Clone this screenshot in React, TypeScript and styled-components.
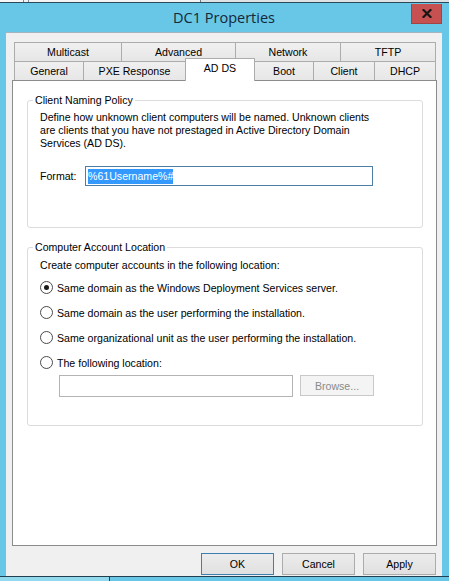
import React from "react";
import styled, { createGlobalStyle } from "styled-components";

const GlobalStyle = createGlobalStyle`
  html, body { margin: 0; padding: 0; }
  body {
    background: #68c6e6;
    overflow: hidden;
    font-family: "Liberation Sans", Arial, sans-serif;
    font-size: 10.6px;
    color: #000;
  }
`;

const Screen = styled.div`
  width: 449px;
  height: 581px;
  display: flex;
  flex-direction: column;
  background: #68c6e6;
  overflow: hidden;
`;

/* sliver of the window that sits behind the dialog */
const BackdropTop = styled.div`
  flex: none;
  height: 2px;
  background: linear-gradient(
    to right,
    #f6f6f6 0 23px,
    #7d8a93 23px 24px,
    #f4f4f4 24px 28px,
    #7d8a93 28px 29px,
    #f4f4f4 29px 200px,
    #6b7c88 200px 201px,
    #dde2e5 201px
  );
`;

const BackdropBottom = styled.div`
  flex: none;
  height: 4px;
  border-top: 1px solid #22404f;
  background: linear-gradient(
    to right,
    #93d9ee 0 109px,
    #22404f 109px 110px,
    #68c6e6 110px
  );
`;

const Window = styled.div`
  flex: none;
  height: 574px;
  box-sizing: border-box;
  border-top: 1px solid #2a4a5c;
  background: #68c6e6;
  display: flex;
  flex-direction: column;
  padding: 0 7px 0 6px;
`;

const TitleBar = styled.div`
  flex: none;
  height: 29px;
  display: grid;
  grid-template-columns: 1fr auto 1fr;
  align-items: center;
`;

const Title = styled.div`
  grid-column: 2;
  font-family: "Open Sans", "Noto Sans", sans-serif;
  font-size: 14.5px;
  color: #14283a;
`;

const CloseButton = styled.div`
  grid-column: 3;
  justify-self: end;
  align-self: start;
  margin-top: 1px;
  width: 31px;
  height: 20px;
  box-sizing: border-box;
  background: #c75050;
  border: 1px solid #a24444;
  border-top: none;
  display: flex;
  align-items: center;
  justify-content: center;
`;

const Client = styled.div`
  flex: 1;
  box-sizing: border-box;
  background: #f0f0f0;
  border-top: 1px solid #a3b5c0;
  padding: 9px 5px 1px 6px;
  display: flex;
  flex-direction: column;
`;

const TabStrip = styled.div`
  margin: 0 2px;
  display: flex;
  flex-direction: column;
`;

const TabRow = styled.div`
  display: flex;
  align-items: flex-start;
  height: 19px;
`;

const Tab = styled.div<{ $w: number; $active?: boolean }>`
  flex: none;
  width: ${(p) => p.$w}px;
  box-sizing: border-box;
  height: ${(p) => (p.$active ? 23 : 20)}px;
  margin-top: ${(p) => (p.$active ? -3 : 0)}px;
  padding-bottom: ${(p) => (p.$active ? 4 : 1)}px;
  border: 1px solid #acacac;
  border-bottom: none;
  background: ${(p) => (p.$active ? "#fff" : "linear-gradient(#f0f0f0, #e6e6e6)")};
  position: ${(p) => (p.$active ? "relative" : "static")};
  z-index: ${(p) => (p.$active ? 1 : "auto")};
  display: flex;
  align-items: center;
  justify-content: center;
  white-space: nowrap;
  & + & { margin-left: -1px; }
`;

const Panel = styled.div`
  flex: none;
  height: 466px;
  box-sizing: border-box;
  background: #fff;
  border: 1px solid #8b8b8b;
  padding: 0 13px 0 14px;
  display: flex;
  flex-direction: column;
`;

const Group = styled.fieldset<{ $top: number; $bottom: number }>`
  margin: ${(p) => p.$top}px 0 0 0;
  padding: 0 12px ${(p) => p.$bottom}px 12px;
  border: 1px solid #dcdcdc;
  border-radius: 3px;
  min-width: 0;
`;

const Legend = styled.legend`
  padding: 0 2px;
  margin-left: -7px;
  line-height: 14px;
`;

const Text = styled.div<{ $top?: number }>`
  margin-top: ${(p) => p.$top ?? 0}px;
  line-height: 13px;
  white-space: nowrap;
`;

const FieldRow = styled.div<{ $top?: number }>`
  display: flex;
  align-items: center;
  margin-top: ${(p) => p.$top ?? 0}px;
`;

const FieldLabel = styled.span`
  width: 45px;
  flex: none;
`;

const TextBox = styled.div<{ $w: number; $h: number; $focused?: boolean }>`
  width: ${(p) => p.$w}px;
  height: ${(p) => p.$h}px;
  box-sizing: border-box;
  border: 1px solid ${(p) => (p.$focused ? "#4d7ea6" : "#b4b4b4")};
  background: #fff;
  display: flex;
  align-items: center;
  padding-left: 2px;
`;

const Selection = styled.span`
  background: #3399ff;
  color: #fff;
  line-height: 15px;
`;

const RadioRow = styled.label`
  display: flex;
  align-items: center;
  height: 25px;
  gap: 4px;
  white-space: nowrap;
`;

const RadioDot = styled.span<{ $checked?: boolean }>`
  flex: none;
  width: 13px;
  height: 13px;
  box-sizing: border-box;
  border-radius: 50%;
  border: 1px solid #4a4a4a;
  background: #fff;
  display: flex;
  align-items: center;
  justify-content: center;
  &::after {
    content: "";
    display: ${(p) => (p.$checked ? "block" : "none")};
    width: 5px;
    height: 5px;
    border-radius: 50%;
    background: #1a1a1a;
  }
`;

const RadioList = styled.div`
  margin-top: 3px;
  display: flex;
  flex-direction: column;
`;

const Button = styled.div<{ $default?: boolean; $disabled?: boolean; $w?: number; $h?: number }>`
  flex: none;
  width: ${(p) => p.$w ?? 73}px;
  height: ${(p) => p.$h ?? 22}px;
  box-sizing: border-box;
  border: 1px solid
    ${(p) => (p.$default ? "#3c7fb1" : p.$disabled ? "#c9c9c9" : "#acacac")};
  background: ${(p) => (p.$disabled ? "#f4f4f4" : "linear-gradient(#ececec, #e0e0e0)")};
  color: ${(p) => (p.$disabled ? "#8a8a8a" : "#000")};
  display: flex;
  align-items: center;
  justify-content: center;
`;

const LocationRow = styled.div`
  display: flex;
  align-items: flex-start;
  gap: 7px;
  margin-left: 19px;
`;

const ButtonBar = styled.div`
  margin-top: 7px;
  padding-right: 1px;
  display: flex;
  justify-content: flex-end;
  gap: 8px;
`;

const topTabs = [
  { label: "Multicast", w: 108 },
  { label: "Advanced", w: 115 },
  { label: "Network", w: 106 },
  { label: "TFTP", w: 96 },
];

const bottomTabs = [
  { label: "General", w: 70 },
  { label: "PXE Response", w: 103 },
  { label: "AD DS", w: 70, active: true },
  { label: "Boot", w: 60 },
  { label: "Client", w: 62 },
  { label: "DHCP", w: 62 },
];

const radios = [
  { label: "Same domain as the Windows Deployment Services server.", checked: true },
  { label: "Same domain as the user performing the installation." },
  { label: "Same organizational unit as the user performing the installation." },
  { label: "The following location:" },
];

export default function App() {
  return (
    <>
      <GlobalStyle />
      <Screen>
        <BackdropTop />
        <Window>
          <TitleBar>
            <Title>DC1 Properties</Title>
            <CloseButton>
              <svg width="10" height="9" viewBox="0 0 10 9">
                <path d="M1.5 1 L8.5 8 M8.5 1 L1.5 8" stroke="#161616" strokeWidth="2.2" strokeLinecap="square" />
              </svg>
            </CloseButton>
          </TitleBar>
          <Client>
            <TabStrip>
              <TabRow>
                {topTabs.map((t) => (
                  <Tab key={t.label} $w={t.w}>{t.label}</Tab>
                ))}
              </TabRow>
              <TabRow>
                {bottomTabs.map((t) => (
                  <Tab key={t.label} $w={t.w} $active={t.active}>{t.label}</Tab>
                ))}
              </TabRow>
            </TabStrip>
            <Panel>
              <Group $top={12} $bottom={41}>
                <Legend>Client Naming Policy</Legend>
                <Text $top={4}>
                  Define how unknown client computers will be named. Unknown clients
                  <br />
                  are clients that you have not prestaged in Active Directory Domain
                  <br />
                  Services (AD DS).
                </Text>
                <FieldRow $top={16}>
                  <FieldLabel>Format:</FieldLabel>
                  <TextBox $w={288} $h={20} $focused>
                    <Selection>%61Username%#</Selection>
                  </TextBox>
                </FieldRow>
              </Group>
              <Group $top={12} $bottom={28}>
                <Legend>Computer Account Location</Legend>
                <Text $top={5}>Create computer accounts in the following location:</Text>
                <RadioList>
                  {radios.map((r) => (
                    <RadioRow key={r.label}>
                      <RadioDot $checked={r.checked} />
                      {r.label}
                    </RadioRow>
                  ))}
                </RadioList>
                <LocationRow>
                  <TextBox $w={234} $h={22} />
                  <Button $disabled $w={74} $h={21}>Browse...</Button>
                </LocationRow>
              </Group>
            </Panel>
            <ButtonBar>
              <Button $default>OK</Button>
              <Button>Cancel</Button>
              <Button>Apply</Button>
            </ButtonBar>
          </Client>
        </Window>
        <BackdropBottom />
      </Screen>
    </>
  );
}
